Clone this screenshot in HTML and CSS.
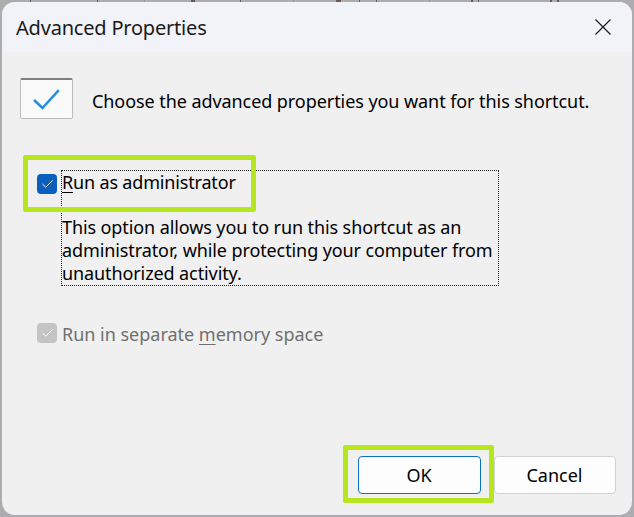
FILE: index.html
```html
<!DOCTYPE html>
<html lang="en">
<head>
<meta charset="utf-8">
<title>Advanced Properties</title>
<link rel="stylesheet" href="styles.css">
</head>
<body>
<div class="backdrop">
  <i class="tick t1"></i><i class="tick t2"></i><i class="tick t3 faint"></i><i class="tick t4"></i><i class="tick t5"></i><i class="tick t6 faint"></i><i class="tick t7"></i><i class="tick t8"></i><i class="tick t9"></i><i class="tick t10 faint"></i><i class="tick t11"></i><i class="tick t12"></i><i class="tick t13"></i><i class="tick t14"></i>
</div>
<main class="dialog">
  <header class="titlebar">
    <h1 class="title">Advanced Properties</h1>
    <button class="close" aria-label="Close">
      <svg width="16" height="16" viewBox="0 0 16 16"><path d="M0.5 0.5 L15.5 15.5 M15.5 0.5 L0.5 15.5" stroke="#1a1a1a" stroke-width="1.2" fill="none"/></svg>
    </button>
  </header>
  <section class="content">
    <div class="intro">
      <div class="iconbox">
        <svg width="27" height="21" viewBox="0 0 27 21"><path d="M1 11 L9.5 19 L25.8 1.2" stroke="#1f8fe0" stroke-width="2.5" fill="none"/></svg>
      </div>
      <p class="intro-text">Choose the advanced properties you want for this shortcut.</p>
    </div>
    <div class="option-group">
      <div class="checkbox checked">
        <svg width="11" height="8" viewBox="0 0 11 8"><path d="M0.5 4 L3.8 7.2 L10.5 0.5" stroke="#fff" stroke-width="1" fill="none"/></svg>
      </div>
      <div class="focus-box">
        <div class="label label-run"><u>R</u>un as administrator</div>
        <p class="desc">This option allows you to run this shortcut as an administrator, while protecting your computer from unauthorized activity.</p>
      </div>
    </div>
    <div class="option-disabled">
      <div class="checkbox disabled">
        <svg width="11" height="8" viewBox="0 0 11 8"><path d="M0.5 4 L3.8 7.2 L10.5 0.5" stroke="#fff" stroke-width="1" fill="none"/></svg>
      </div>
      <div class="label muted">Run in separate <u>m</u>emory space</div>
    </div>
    <div class="actions">
      <button class="btn primary">OK</button>
      <button class="btn">Cancel</button>
    </div>
    <span class="hl hl-run"></span>
    <span class="hl hl-ok"></span>
  </section>
</main>
</body>
</html>
```
FILE: styles.css
```css
html, body { margin: 0; padding: 0; }
body {
  width: 634px; height: 517px; overflow: hidden;
  background: #adadaf;
  font-family: "Noto Sans", "Open Sans", sans-serif;
  position: relative;
}
.backdrop { position: absolute; inset: 0; }
.tick { position: absolute; top: 0; width: 1px; height: 3px; background: #6a5a55; }
.tick.faint { background: #98989a; }
.t1 { left: 30px; } .t2 { left: 97px; } .t3 { left: 144px; } .t4 { left: 191px; width: 4px; }
.t5 { left: 240px; } .t6 { left: 293px; } .t7 { left: 336px; width: 5px; } .t8 { left: 359px; }
.t9 { left: 376px; } .t10 { left: 429px; } .t11 { left: 471px; width: 2px; } .t12 { left: 478px; }
.t13 { left: 550px; width: 2px; } .t14 { left: 557px; width: 2px; }
.dialog {
  position: absolute; left: 2px; top: 2px; width: 630px; height: 513px;
  box-sizing: border-box;
  border-radius: 13px; overflow: hidden;
  background: #f0f0f0;
  display: flex; flex-direction: column;
}
.titlebar {
  height: 50px; background: #f1f3f9; flex: none;
  display: flex; align-items: center; justify-content: space-between;
  padding: 0 21px 0 14px;
}
.title { margin: 0; font-size: 20px; font-weight: 400; color: #1a1a1a; letter-spacing: -0.2px; }
.close { border: 0; background: none; padding: 0; display: flex; }
.content { position: relative; flex: 1; padding: 26px 18px 0; display: flex; flex-direction: column; }
.intro { display: flex; align-items: center; gap: 19px; }
.iconbox {
  width: 53px; height: 41px; box-sizing: border-box;
  background: #fafafa; border: 1px solid #bdbdbd; border-top: 2px solid #7f7f7f; border-radius: 2px;
  display: flex; align-items: center; justify-content: center;
}
.intro-text { margin: 0; padding-top: 5px; font-size: 18px; color: #000; letter-spacing: -0.07px; }
.option-group { display: flex; align-items: flex-start; margin-top: 51px; margin-left: 17px; }
.checkbox {
  width: 20px; height: 20px; border-radius: 4px; flex: none;
  display: flex; align-items: center; justify-content: center;
  margin-top: 4px; margin-right: 4px;
}
.checked { background: #0a5fbd; }
.disabled { background: #c4c4c4; }
.focus-box {
  width: 438px; height: 116px; box-sizing: border-box;
  border: 1px dotted #222;
}
.label { font-size: 18px; line-height: 24px; letter-spacing: -0.01px; color: #000; }
.label-run { letter-spacing: -0.17px; margin-top: -1px; }
.label u { text-underline-offset: 3px; text-decoration-thickness: 1px; }
.desc { margin: 22px 0 0; font-size: 18px; line-height: 23px; letter-spacing: -0.1px; color: #000; }
.option-disabled { display: flex; align-items: flex-start; margin-top: 36px; margin-left: 17px; }
.option-disabled .checkbox { margin-top: 1px; margin-right: 5px; }
.label.muted { color: #6f6f6f; }
.actions { position: absolute; right: 16px; bottom: 21px; display: flex; gap: 13px; }
.btn {
  width: 122px; height: 38px; box-sizing: border-box;
  background: #fdfdfd; border: 1px solid #d2d2d2; border-radius: 4px;
  font: inherit; font-size: 18px; color: #000; padding: 0 1px 0 0;
}
.primary { width: 123px; border-color: #0a6fc8; }
.hl { position: absolute; border: 5px solid #b6e61e; border-radius: 2px; box-sizing: border-box; }
.hl-run { left: 21px; top: 103px; width: 233px; height: 57px; }
.hl-ok { left: 341px; top: 393px; width: 151px; height: 58px; }
```
